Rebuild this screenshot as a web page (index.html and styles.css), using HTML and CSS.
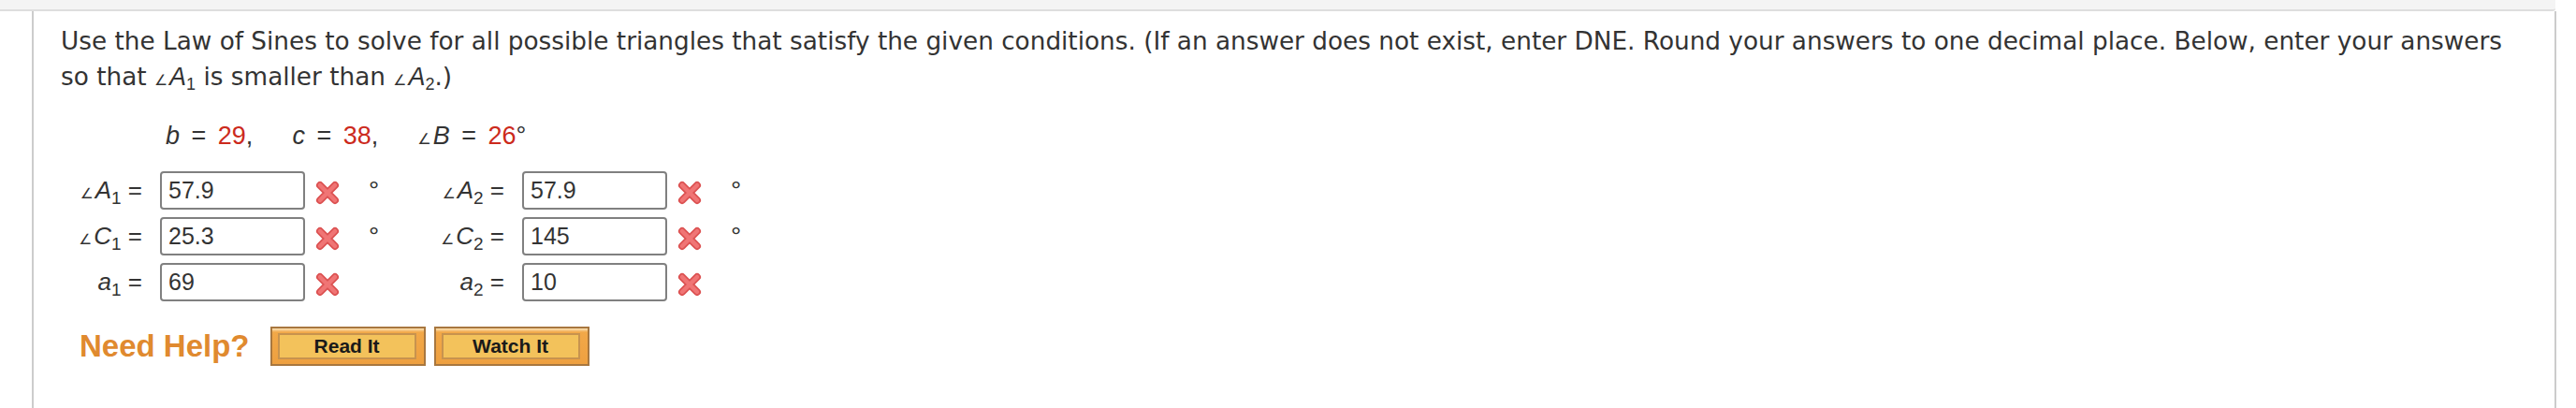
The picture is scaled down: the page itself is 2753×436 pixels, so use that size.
FILE: index.html
```html
<!DOCTYPE html>
<html>
<head>
<meta charset="utf-8">
<link rel="stylesheet" href="styles.css">
</head>
<body>
<div class="topbar"></div>
<div class="panel">
  <p class="prompt">Use the Law of Sines to solve for all possible triangles that satisfy the given conditions. (If an answer does not exist, enter DNE. Round your answers to one decimal place. Below, enter your answers so that <span class="ang">∠</span><i>A</i><sub>1</sub> is smaller than <span class="ang">∠</span><i>A</i><sub>2</sub>.)</p>
  <div class="given">
    <span class="term"><i>b</i> = <span class="val">29</span>,</span>
    <span class="term"><i>c</i> = <span class="val">38</span>,</span>
    <span class="term"><span class="ang">∠</span><i>B</i> = <span class="val">26</span>°</span>
  </div>
  <div class="answers">
    <div class="lbl"><span class="ang">∠</span><i>A</i><sub>1</sub> =</div>
    <div class="box">57.9</div>
    <div class="mark"><svg width="26" height="26" viewBox="0 0 26 26"><path d="M5 5 L21 21 M21 5 L5 21" stroke="#dc5252" stroke-width="8" stroke-linecap="round"/><path d="M5 5 L21 21 M21 5 L5 21" stroke="#f07575" stroke-width="4.5" stroke-linecap="round"/></svg></div>
    <div class="deg">°</div>
    <div class="lbl"><span class="ang">∠</span><i>A</i><sub>2</sub> =</div>
    <div class="box">57.9</div>
    <div class="mark"><svg width="26" height="26" viewBox="0 0 26 26"><path d="M5 5 L21 21 M21 5 L5 21" stroke="#dc5252" stroke-width="8" stroke-linecap="round"/><path d="M5 5 L21 21 M21 5 L5 21" stroke="#f07575" stroke-width="4.5" stroke-linecap="round"/></svg></div>
    <div class="deg">°</div>

    <div class="lbl"><span class="ang">∠</span><i>C</i><sub>1</sub> =</div>
    <div class="box">25.3</div>
    <div class="mark"><svg width="26" height="26" viewBox="0 0 26 26"><path d="M5 5 L21 21 M21 5 L5 21" stroke="#dc5252" stroke-width="8" stroke-linecap="round"/><path d="M5 5 L21 21 M21 5 L5 21" stroke="#f07575" stroke-width="4.5" stroke-linecap="round"/></svg></div>
    <div class="deg">°</div>
    <div class="lbl"><span class="ang">∠</span><i>C</i><sub>2</sub> =</div>
    <div class="box">145</div>
    <div class="mark"><svg width="26" height="26" viewBox="0 0 26 26"><path d="M5 5 L21 21 M21 5 L5 21" stroke="#dc5252" stroke-width="8" stroke-linecap="round"/><path d="M5 5 L21 21 M21 5 L5 21" stroke="#f07575" stroke-width="4.5" stroke-linecap="round"/></svg></div>
    <div class="deg">°</div>

    <div class="lbl"><i>a</i><sub>1</sub> =</div>
    <div class="box">69</div>
    <div class="mark"><svg width="26" height="26" viewBox="0 0 26 26"><path d="M5 5 L21 21 M21 5 L5 21" stroke="#dc5252" stroke-width="8" stroke-linecap="round"/><path d="M5 5 L21 21 M21 5 L5 21" stroke="#f07575" stroke-width="4.5" stroke-linecap="round"/></svg></div>
    <div class="deg"></div>
    <div class="lbl"><i>a</i><sub>2</sub> =</div>
    <div class="box">10</div>
    <div class="mark"><svg width="26" height="26" viewBox="0 0 26 26"><path d="M5 5 L21 21 M21 5 L5 21" stroke="#dc5252" stroke-width="8" stroke-linecap="round"/><path d="M5 5 L21 21 M21 5 L5 21" stroke="#f07575" stroke-width="4.5" stroke-linecap="round"/></svg></div>
    <div class="deg"></div>
  </div>
  <div class="help">
    <span class="need">Need Help?</span>
    <button class="btn"><span class="btn-inner">Read It</span></button>
    <button class="btn"><span class="btn-inner">Watch It</span></button>
  </div>
</div>
</body>
</html>
```
FILE: styles.css
```css
html, body {
  margin: 0;
  padding: 0;
  background: #ffffff;
}
body {
  width: 2753px;
  height: 436px;
  overflow: hidden;
  color: #333333;
}
.topbar {
  width: 2731px;
  height: 10px;
  background: #f4f4f4;
  border-bottom: 2px solid #dedede;
  border-bottom-right-radius: 3px;
}
.panel {
  margin-left: 34px;
  width: 2698px;
  height: 424px;
  border-left: 2px solid #cccccc;
  border-right: 2px solid #cccccc;
  padding: 0 48px 0 29px;
  box-sizing: border-box;
}
.prompt {
  margin: 0;
  padding-top: 13px;
  font-family: "DejaVu Sans", Verdana, sans-serif;
  font-size: 26.3px;
  line-height: 38px;
}
.prompt i {
  font-family: "Liberation Sans", Arial, sans-serif;
  font-size: 27px;
}
.prompt sub {
  font-family: "Liberation Sans", Arial, sans-serif;
  font-size: 18px;
  line-height: 0;
  vertical-align: -0.3em;
}
.ang {
  font-family: "DejaVu Sans", sans-serif;
  font-size: 0.6em;
  font-style: normal;
  margin-right: 2px;
}
.given {
  margin-top: 22px;
  padding-left: 112px;
  font-family: "Liberation Sans", Arial, sans-serif;
  font-size: 27px;
  word-spacing: 5px;
  line-height: 36px;
  display: flex;
  gap: 42px;
}
.val {
  color: #cc2a1c;
}
.answers {
  margin-top: 16px;
  display: grid;
  grid-template-columns: 106px 155px 37px 90px 105px 155px 37px 40px;
  grid-auto-rows: 41px;
  row-gap: 8px;
  font-family: "Liberation Sans", Arial, sans-serif;
  font-size: 26px;
}
.lbl {
  text-align: right;
  padding-right: 19px;
  line-height: 41px;
  white-space: nowrap;
}
.lbl sub {
  font-size: 19px;
  line-height: 0;
  vertical-align: -0.3em;
}
.box {
  border: 2px solid #808080;
  border-radius: 4px;
  box-sizing: border-box;
  padding-left: 7px;
  font-size: 25px;
  line-height: 36px;
  color: #333;
}
.mark {
  padding-left: 11px;
  padding-top: 10px;
}
.mark svg {
  display: block;
}
.deg {
  padding-left: 31px;
  padding-top: 4px;
  line-height: 34px;
  font-size: 28px;
}
.help {
  margin-top: 27px;
  display: flex;
  align-items: center;
  padding-left: 20px;
}
.need {
  font-family: "Liberation Sans", Arial, sans-serif;
  font-weight: bold;
  font-size: 33px;
  color: #e08a2f;
  margin-right: 22px;
}
.btn {
  width: 166px;
  height: 42px;
  margin: 0 9px 0 0;
  padding: 5px 8px 5px 6px;
  box-sizing: border-box;
  border: 2px solid #a8773f;
  background: linear-gradient(#fbe3b8 0, #f2a848 4px, #eea040 100%);
  display: flex;
}
.btn-inner {
  flex: 1;
  border: 2px solid #c8934e;
  background: #f3c25b;
  font-family: "Liberation Sans", Arial, sans-serif;
  font-weight: bold;
  font-size: 21px;
  color: #1a1a1a;
  display: flex;
  align-items: center;
  justify-content: center;
}
```
